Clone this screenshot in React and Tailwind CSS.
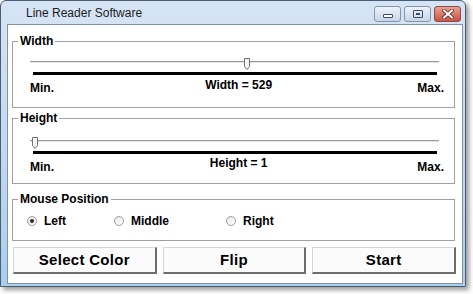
import React from "react";

function Thumb() {
  return (
    <svg width="6" height="12" viewBox="0 0 6 12" className="absolute -top-[4px]">
      <path d="M0.5 0.5 H5.5 V8.5 L3 11.5 L0.5 8.5 Z" fill="#f2f2f2" stroke="#6f6f6f" />
      <path d="M1.5 1.5 V8" stroke="#ffffff" />
    </svg>
  );
}

function GroupBox({ label, className, children }) {
  return (
    <div className={`relative ml-[4px] w-[443px] border border-[#a0a0a0] ${className}`}>
      <span className="absolute -top-[8px] left-[5px] bg-white px-[2px] text-[12px] leading-[14px] font-bold text-black">
        {label}
      </span>
      {children}
    </div>
  );
}

function SliderBlock({ thumbLeft, valueText, trackTop, labelTop, valueTop }) {
  return (
    <>
      <div
        className="relative ml-[17px] w-[409px] h-[2px] border-t border-[#9a9a9a] border-b border-b-[#e4e4e4]"
        style={{ marginTop: trackTop }}
      >
        <div className="absolute top-0" style={{ left: thumbLeft }}>
          <Thumb />
        </div>
      </div>
      <div className="mt-[9px] ml-[20px] w-[404px] h-[3px] bg-black" />
      <div className="flex items-start pl-[17px] pr-[10px] text-[12px] leading-[14px] font-bold text-black">
        <span style={{ marginTop: labelTop }}>Min.</span>
        <span className="flex-1 text-center pl-[6px]" style={{ marginTop: valueTop }}>
          {valueText}
        </span>
        <span style={{ marginTop: labelTop }}>Max.</span>
      </div>
    </>
  );
}

function Radio({ checked, label, width }) {
  return (
    <div className="flex items-center" style={{ width }}>
      <span className="w-[10px] h-[10px] rounded-full border border-[#9c9c9c] bg-gradient-to-br from-[#e8e8e8] to-white flex items-center justify-center">
        {checked && <span className="w-[4px] h-[4px] rounded-full bg-[#2a2a2a]" />}
      </span>
      <span className="ml-[7px] text-[12px] leading-[14px] font-bold text-black">{label}</span>
    </div>
  );
}

function CaptionButton({ children, close }) {
  return (
    <div
      className={`w-[27px] h-[16px] rounded-[3px] border flex items-center justify-center ${
        close
          ? "border-[#8d4b44] bg-gradient-to-b from-[#e7a196] to-[#c9503e]"
          : "border-[#8396ae] bg-gradient-to-b from-[#eef3fa] to-[#c7d6e9]"
      }`}
    >
      {children}
    </div>
  );
}

function Button({ children }) {
  return (
    <button className="flex-1 h-[27px] bg-[#fbfbfb] border-t border-l border-[#d6d6d6] border-b-2 border-r-2 border-b-[#6e6e6e] border-r-[#6e6e6e] text-[15px] font-bold text-black tracking-[0.3px]">
      {children}
    </button>
  );
}

export default function App() {
  return (
    <div className="w-[473px] h-[294px] bg-white font-['Liberation_Sans',Arial,sans-serif]">
      <div className="w-[466px] h-[287px] flex flex-col rounded-t-[6px] border border-[#4a5d75] bg-gradient-to-b from-[#d6e5f5] via-[#c4d8ee] to-[#aacfea] shadow-[3px_3px_5px_rgba(0,0,0,0.4)]">
        <div className="h-[23px] flex items-center pl-[25px] pr-[4px]">
          <span className="text-[12px] text-[#1c1c1c] flex-1 pt-[1px]">Line Reader Software</span>
          <div className="flex gap-[3px] mt-[2px]">
            <CaptionButton>
              <span className="mt-[5px] w-[10px] h-[4px] rounded-[1px] border border-[#3d4d63] bg-white" />
            </CaptionButton>
            <CaptionButton>
              <span className="w-[10px] h-[8px] rounded-[1px] border border-[#3d4d63] flex items-center justify-center">
                <span className="w-[4px] h-[2px] border border-[#3d4d63]" />
              </span>
            </CaptionButton>
            <CaptionButton close>
              <svg width="12" height="10" viewBox="0 0 12 10">
                <path d="M2 1.5 L10 8.5 M10 1.5 L2 8.5" stroke="#5a2820" strokeWidth="3.6" strokeLinecap="square" />
                <path d="M2 1.5 L10 8.5 M10 1.5 L2 8.5" stroke="#ffffff" strokeWidth="2" strokeLinecap="square" />
              </svg>
            </CaptionButton>
          </div>
        </div>
        <div className="flex-1 flex pl-[6px] pr-[2px] pb-[2px]">
          <div className="flex-1 flex flex-col bg-white border border-[#7f95ae]">
            <GroupBox label="Width" className="mt-[16px] h-[67px]">
              <SliderBlock thumbLeft={214} valueText="Width = 529" trackTop={19} labelTop={6} valueTop={3} />
            </GroupBox>
            <GroupBox label="Height" className="mt-[10px] h-[66px]">
              <SliderBlock thumbLeft={2} valueText="Height = 1" trackTop={21} labelTop={6} valueTop={2} />
            </GroupBox>
            <GroupBox label="Mouse Position" className="mt-[15px] h-[42px]">
              <div className="flex mt-[14px] ml-[14px]">
                <Radio checked label="Left" width={87} />
                <Radio label="Middle" width={112} />
                <Radio label="Right" width={100} />
              </div>
            </GroupBox>
            <div className="flex gap-[6px] mt-[6px] ml-[5px] mr-[6px]">
              <Button>Select Color</Button>
              <Button>Flip</Button>
              <Button>Start</Button>
            </div>
          </div>
        </div>
      </div>
    </div>
  );
}
